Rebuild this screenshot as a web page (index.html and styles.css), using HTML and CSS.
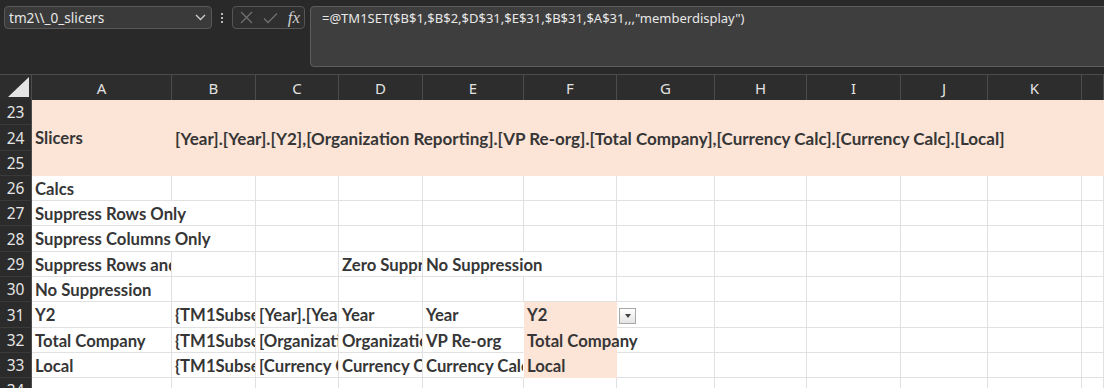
FILE: index.html
```html
<!DOCTYPE html>
<html>
<head>
    <meta charset="utf-8" />
    <title>tm2\\_0_slicers</title>
    <link rel="stylesheet" href="styles.css">
</head>
<body>
    <div class="topbar">
        <div class="namebox">
            <span>tm2\\_0_slicers</span>
            <svg width="11" height="7" viewBox="0 0 11 7"><polyline points="1,1 5.5,5.5 10,1" fill="none" stroke="#cfcfcf" stroke-width="1.3" /></svg>
        </div>
        <div class="grip"><i></i><i></i><i></i></div>
        <div class="tools">
            <svg width="13" height="13" viewBox="0 0 13 13"><path d="M1 1 L12 12 M12 1 L1 12" stroke="#707070" stroke-width="1.3" /></svg>
            <svg width="15" height="12" viewBox="0 0 15 12"><polyline points="1,6.5 5,10.5 14,1.5" fill="none" stroke="#707070" stroke-width="1.3" /></svg>
            <span class="fx">fx</span>
        </div>
        <div class="formula">=@TM1SET($B$1,$B$2,$D$31,$E$31,$B$31,$A$31,,,"memberdisplay")</div>
    </div>

    <div class="sheet">
        <div class="row head">
            <div class="corner"><svg width="22" height="21" viewBox="0 0 22 21"><polygon points="21,0 21,20 0,20" fill="#e4e4e4" /></svg></div>
            <div class="ch">A</div><div class="ch">B</div><div class="ch">C</div><div class="ch">D</div>
            <div class="ch">E</div><div class="ch">F</div><div class="ch">G</div><div class="ch">H</div>
            <div class="ch">I</div><div class="ch">J</div><div class="ch">K</div><div class="ch"></div>
        </div>

        <div class="row">
            <div class="rh">23</div>
            <div class="cell fill wide"></div>
        </div>
        <div class="row tall">
            <div class="rh">24</div>
            <div class="cell fill">Slicers</div>
            <div class="cell fill spill rest">[Year].[Year].[Y2],[Organization Reporting].[VP Re-org].[Total Company],[Currency Calc].[Currency Calc].[Local]</div>
        </div>
        <div class="row">
            <div class="rh">25</div>
            <div class="cell fill wide"></div>
        </div>

        <div class="row">
            <div class="rh">26</div>
            <div class="cell">Calcs</div>
            <div class="cell"></div><div class="cell"></div><div class="cell"></div><div class="cell"></div>
            <div class="cell"></div><div class="cell"></div><div class="cell"></div><div class="cell"></div>
            <div class="cell"></div><div class="cell"></div><div class="cell"></div>
        </div>
        <div class="row">
            <div class="rh">27</div>
            <div class="cell s2">Suppress Rows Only</div>
            <div class="cell"></div><div class="cell"></div><div class="cell"></div><div class="cell"></div>
            <div class="cell"></div><div class="cell"></div><div class="cell"></div><div class="cell"></div>
            <div class="cell"></div><div class="cell"></div>
        </div>
        <div class="row tall">
            <div class="rh">28</div>
            <div class="cell s2">Suppress Columns Only</div>
            <div class="cell"></div><div class="cell"></div><div class="cell"></div><div class="cell"></div>
            <div class="cell"></div><div class="cell"></div><div class="cell"></div><div class="cell"></div>
            <div class="cell"></div><div class="cell"></div>
        </div>
        <div class="row">
            <div class="rh">29</div>
            <div class="cell">Suppress Rows and Columns</div>
            <div class="cell"></div>
            <div class="cell"></div>
            <div class="cell">Zero Suppression</div>
            <div class="cell s2">No Suppression</div>
            <div class="cell"></div><div class="cell"></div><div class="cell"></div>
            <div class="cell"></div><div class="cell"></div><div class="cell"></div>
        </div>
        <div class="row">
            <div class="rh">30</div>
            <div class="cell">No Suppression</div>
            <div class="cell"></div><div class="cell"></div><div class="cell"></div><div class="cell"></div>
            <div class="cell"></div><div class="cell"></div><div class="cell"></div><div class="cell"></div>
            <div class="cell"></div><div class="cell"></div><div class="cell"></div>
        </div>
        <div class="row tall">
            <div class="rh">31</div>
            <div class="cell">Y2</div>
            <div class="cell">{TM1SubsetToSet([Year].[Year],"Y2")}</div>
            <div class="cell">[Year].[Year].[Y2]</div>
            <div class="cell">Year</div>
            <div class="cell nr">Year</div>
            <div class="cell fill">Y2</div>
            <div class="cell"><span class="dropbtn"></span></div>
            <div class="cell"></div><div class="cell"></div><div class="cell"></div>
            <div class="cell"></div><div class="cell"></div>
        </div>
        <div class="row">
            <div class="rh">32</div>
            <div class="cell">Total Company</div>
            <div class="cell">{TM1SubsetToSet([Organization Reporting])}</div>
            <div class="cell">[Organization Reporting].[VP Re-org]</div>
            <div class="cell">Organization Reporting</div>
            <div class="cell nr">VP Re-org</div>
            <div class="cell fill spill">Total Company</div>
            <div class="cell"></div><div class="cell"></div><div class="cell"></div>
            <div class="cell"></div><div class="cell"></div><div class="cell"></div>
        </div>
        <div class="row">
            <div class="rh">33</div>
            <div class="cell">Local</div>
            <div class="cell">{TM1SubsetToSet([Currency Calc])}</div>
            <div class="cell">[Currency Calc].[Currency Calc]</div>
            <div class="cell">Currency Calc</div>
            <div class="cell nr">Currency Calc</div>
            <div class="cell fill">Local</div>
            <div class="cell"></div><div class="cell"></div><div class="cell"></div>
            <div class="cell"></div><div class="cell"></div><div class="cell"></div>
        </div>
        <div class="row">
            <div class="rh">34</div>
            <div class="cell"></div><div class="cell"></div><div class="cell"></div><div class="cell"></div>
            <div class="cell"></div><div class="cell"></div><div class="cell"></div><div class="cell"></div>
            <div class="cell"></div><div class="cell"></div><div class="cell"></div><div class="cell"></div>
        </div>
    </div>
</body>
</html>
```

FILE: styles.css
```css
body {
    margin:0;
    background:#fff;
    font-family:"Lato", sans-serif;
    overflow:hidden;
}

/* formula bar */
.topbar {
    display:flex;
    align-items:flex-start;
    height:74px;
    box-sizing:border-box;
    padding:6px 0 0 4px;
    background:#292929;
    font-family:"Noto Sans", "Open Sans", sans-serif;
    color:#e8e8e8;
}
.namebox {
    width:208px;
    height:23px;
    box-sizing:border-box;
    display:flex;
    align-items:center;
    justify-content:space-between;
    padding:0 5px 0 4px;
    background:#3a3a3a;
    border:1px solid #585858;
    border-radius:4px;
    font-size:13.6px;
}
.grip {
    width:20px;
    height:23px;
    display:flex;
    flex-direction:column;
    align-items:center;
    justify-content:center;
    gap:2px;
}
    .grip i {
        display:block;
        width:2px;
        height:2px;
        background:#b8b8b8;
    }
.tools {
    width:73px;
    height:23px;
    box-sizing:border-box;
    display:flex;
    align-items:center;
    justify-content:space-between;
    padding:0 4px 0 7px;
    background:#2f2f2f;
    border:1px solid #555;
    border-radius:4px;
}
.fx {
    font-family:"Liberation Serif", serif;
    font-style:italic;
    font-size:17px;
    color:#d0d0d0;
    line-height:1;
}
.formula {
    flex:1;
    margin-left:5px;
    margin-right:-8px;
    height:61px;
    box-sizing:border-box;
    padding:2px 0 0 11px;
    background:#3e3e3e;
    border:1px solid #5e5e5e;
    border-radius:4px;
    font-size:13px;
}

/* grid */
.row {
    display:grid;
    grid-template-columns:32px 140px 84px 83px 84px 101px 93px 98px 92px 94px 87px 94px 1fr;
    height:25px;
}
.row.tall {
    height:26px;
}
.head {
    height:26px;
    background:#2d2d2d;
    border-top:1px solid #4c4c4c;
    box-sizing:border-box;
}
.corner {
    display:flex;
    justify-content:flex-end;
    align-items:flex-end;
    padding:0 1px 2px 0;
    border-right:1px solid #4c4c4c;
}
.ch {
    display:flex;
    align-items:center;
    justify-content:center;
    border-right:1px solid #4c4c4c;
    font-family:"Noto Sans", "Open Sans", sans-serif;
    font-size:15px;
    color:#e2e2e2;
}
.rh {
    display:flex;
    align-items:center;
    justify-content:center;
    box-sizing:border-box;
    background:#2b2b2b;
    border-right:1px solid #4c4c4c;
    border-bottom:1px solid #3a3a3a;
    font-family:"Noto Sans", "Open Sans", sans-serif;
    font-size:15.5px;
    color:#e4e4e4;
}
.cell {
    display:flex;
    align-items:center;
    box-sizing:border-box;
    min-width:0;
    padding:1px 3px 0;
    border-right:1px solid #e1e1e1;
    border-bottom:1px solid #e1e1e1;
    white-space:nowrap;
    overflow:hidden;
    font-weight:700;
    font-size:16.7px;
    color:#363636;
}
.cell.nr {
    border-right-color:transparent;
}
.fill {
    background:#fce4d6;
    border-color:transparent;
}
.spill {
    overflow:visible;
}
.rest {
    grid-column:3 / -1;
    font-size:17.05px;
}
.wide {
    grid-column:2 / -1;
}
.s2 {
    grid-column:span 2;
}
.dropbtn {
    display:flex;
    align-items:center;
    justify-content:center;
    width:17px;
    height:16px;
    box-sizing:border-box;
    margin:2px 0 0 -1px;
    border:1px solid #a8a8a8;
    background:linear-gradient(#ffffff, #e4e4e4);
}
    .dropbtn:after {
        content:'';
        border-left:3px solid transparent;
        border-right:3px solid transparent;
        border-top:4px solid #444;
    }
```
